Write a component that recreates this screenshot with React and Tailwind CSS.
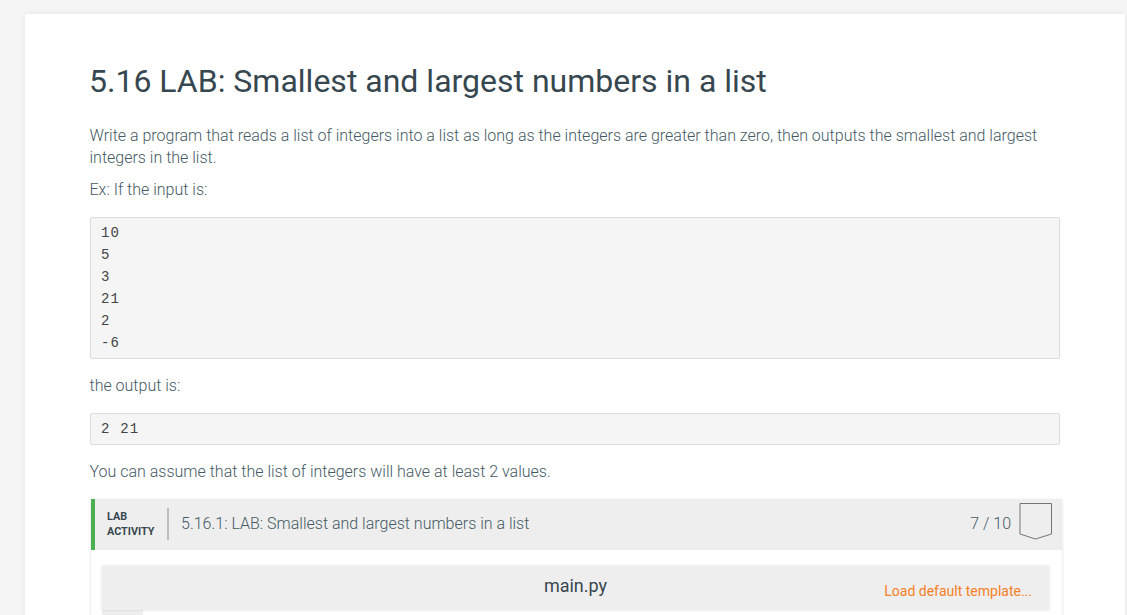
import React from "react";

const inputLines = ["10", "5", "3", "21", "2", "-6"];

const CodeBlock = ({ lines }) => (
  <pre className="ml-px bg-[#f5f5f5] border border-[#dddddd] rounded-[2px] px-[10px] py-[4px] font-['Liberation_Mono',monospace] text-[14px] leading-[22px] tracking-[1.2px] text-[#444444] font-normal">
    {lines.join("\n")}
  </pre>
);

const App = () => {
  return (
    <div className="h-screen overflow-hidden bg-[#f5f5f5] pt-[14px] pl-[25px] font-['Roboto',sans-serif]">
      <div className="w-[1100px] bg-white shadow-[0_0_5px_rgba(0,0,0,0.08)] rounded-[2px] pt-[46px] pl-[64px] pr-[65px] pb-10">
        <h1 className="text-[32px] leading-[42px] font-normal text-[#37474f]">
          5.16 LAB: Smallest and largest numbers in a list
        </h1>

        <p className="mt-[23px] ml-[0.5px] text-[16px] leading-[22px] font-light text-[#455a64]">
          Write a program that reads a list of integers into a list as long as the integers are greater than zero, then outputs the smallest and largest integers in the list.
        </p>
        <p className="mt-[10px] mb-[16px] ml-[0.5px] text-[16px] leading-[22px] font-light text-[#455a64]">Ex: If the input is:</p>
        <CodeBlock lines={inputLines} />
        <p className="mt-[16px] mb-[16px] ml-[0.5px] text-[16px] leading-[22px] font-light text-[#455a64]">the output is:</p>
        <CodeBlock lines={["2 21"]} />
        <p className="mt-[16px] mb-[16px] ml-[0.5px] text-[16px] leading-[22px] font-light text-[#455a64]">
          You can assume that the list of integers will have at least 2 values.
        </p>

        <div className="w-[971px] ml-[2px] shadow-[0_1px_3px_rgba(0,0,0,0.14)]">
          <div className="h-[51px] bg-[#eeeeee] border-l-4 border-[#4caf50] flex items-center pl-[12px] pr-[10px]">
            <div className="w-[60px] pb-[2px] text-[10.8px] leading-[15px] font-bold text-[#37474f]">
              <div>LAB</div>
              <div>ACTIVITY</div>
            </div>
            <div className="w-[2px] h-[32px] mb-[2px] bg-[#bdbdbd] mr-[12px]" />
            <div className="flex-1 pb-[2px] text-[16px] font-light text-[#455a64]">5.16.1: LAB: Smallest and largest numbers in a list</div>
            <div className="pb-[2px] text-[16px] font-light text-[#455a64] mr-[8px]">7 / 10</div>
            <svg width="33" height="37" viewBox="0 0 33 37" fill="none" className="block self-start mt-[4px]">
              <path d="M1 0.5H32.5V31L16.5 36L1 31Z" stroke="#757575" strokeWidth="1" />
            </svg>
          </div>
          <div className="bg-white pl-[11px] pr-[13px] pt-[16px]">
            <div className="h-[44px] bg-[#eeeeee] flex items-center justify-end relative pr-[17px] shadow-[0_0_3px_rgba(0,0,0,0.12)]">
              <div className="absolute inset-x-0 top-[6px] text-center text-[18px] text-[#37474f]">main.py</div>
              <div className="relative mt-[7px] text-[14px] text-[#f58025]">Load default template...</div>
            </div>
            <div className="flex h-[60px]">
              <div className="w-[41px] bg-[#eeeeee]" />
              <div className="flex-1 bg-white" />
            </div>
          </div>
        </div>
      </div>
    </div>
  );
};

export default App;
